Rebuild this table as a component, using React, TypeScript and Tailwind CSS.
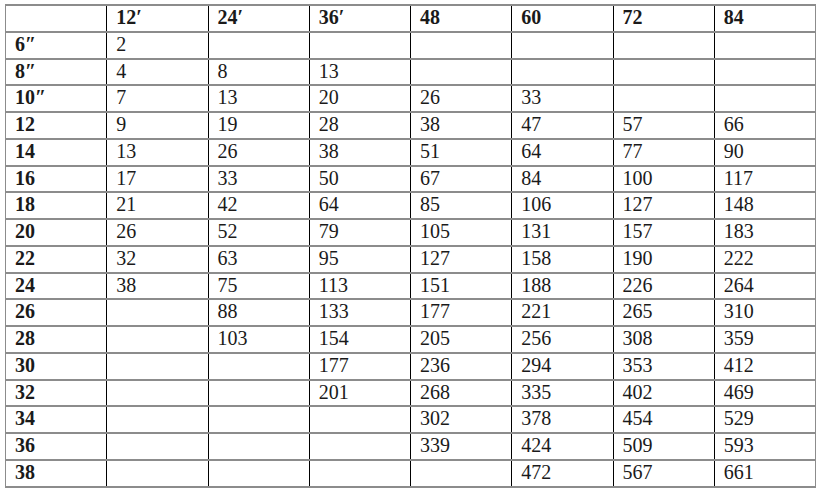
import React from 'react';

const header = ['', '12′', '24′', '36′', '48', '60', '72', '84'];

const rows: string[][] = [
  ['6″', '2', '', '', '', '', '', ''],
  ['8″', '4', '8', '13', '', '', '', ''],
  ['10″', '7', '13', '20', '26', '33', '', ''],
  ['12', '9', '19', '28', '38', '47', '57', '66'],
  ['14', '13', '26', '38', '51', '64', '77', '90'],
  ['16', '17', '33', '50', '67', '84', '100', '117'],
  ['18', '21', '42', '64', '85', '106', '127', '148'],
  ['20', '26', '52', '79', '105', '131', '157', '183'],
  ['22', '32', '63', '95', '127', '158', '190', '222'],
  ['24', '38', '75', '113', '151', '188', '226', '264'],
  ['26', '', '88', '133', '177', '221', '265', '310'],
  ['28', '', '103', '154', '205', '256', '308', '359'],
  ['30', '', '', '177', '236', '294', '353', '412'],
  ['32', '', '', '201', '268', '335', '402', '469'],
  ['34', '', '', '', '302', '378', '454', '529'],
  ['36', '', '', '', '339', '424', '509', '593'],
  ['38', '', '', '', '', '472', '567', '661'],
];

const Row: React.FC<{ cells: string[]; head?: boolean }> = ({ cells, head }) => (
  <div className="flex h-[26.78px] border-b-2 border-[#8c8c8c]">
    {cells.map((c, i) => (
      <div
        key={i}
        className={`flex-1 pl-[9px] leading-[22px] ${
          i === cells.length - 1 ? 'border-r-[1.5px] border-[#8c8c8c]' : 'border-r border-black'
        } ${head || i === 0 ? 'font-bold' : ''}`}
      >
        {c}
      </div>
    ))}
  </div>
);

const App: React.FC = () => {
  return (
    <div className="w-[826px] h-[494px] bg-white pt-[4px] pl-[5px] overflow-hidden text-[20px] text-[#1a1a1a] font-['Liberation_Serif',serif]">
      <div className="w-[811px] border-t-2 border-l-[1.5px] border-[#8c8c8c]">
        <Row cells={header} head />
        {rows.map((r, i) => (
          <Row key={i} cells={r} />
        ))}
      </div>
    </div>
  );
};

export default App;
